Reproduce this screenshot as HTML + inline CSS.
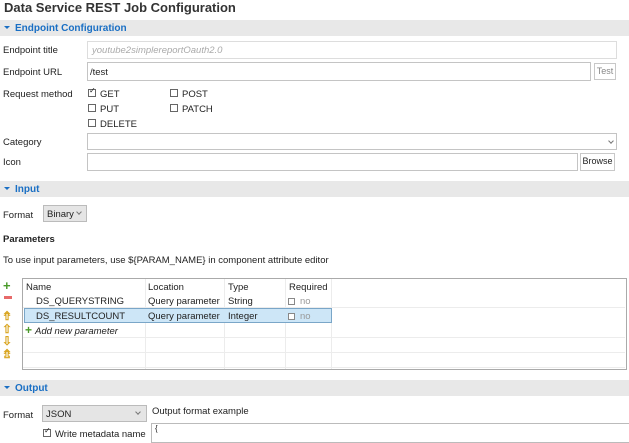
<!DOCTYPE html>
<html><head><meta charset="utf-8"><style>
*{margin:0;padding:0;box-sizing:border-box}
body{width:629px;height:439px;overflow:hidden;background:#fff;font-family:"Liberation Sans",sans-serif;font-size:9.5px;color:#222;position:relative}
.a{position:absolute;white-space:nowrap}
.hdr{position:absolute;left:0;width:629px;height:16px;background:#e8e8e8;color:#1a6fc4;font-weight:bold;font-size:10px;line-height:17px;padding-left:4px}
.hdr:before{content:"";display:inline-block;border-left:3px solid transparent;border-right:3px solid transparent;border-top:3px solid #1a6fc4;margin-right:5px;vertical-align:2px}
.box{position:absolute;border:1px solid #c4c4c4;background:#fff}
.btn{position:absolute;border:1px solid #c8c8c8;background:#fff;text-align:center;line-height:15px;font-size:9px}
.cb{position:absolute;width:8px;height:8px;border:1px solid #666;background:#fff}
.chev{position:absolute;width:4px;height:4px;border-right:1px solid #777;border-bottom:1px solid #777;transform:rotate(45deg)}
.vl{position:absolute;top:279px;width:1px;height:90px;background:#ececec}
.hl{position:absolute;left:23px;width:602px;height:1px;background:#ececec}
.ar{position:absolute;left:2px;color:#d9a520;font-size:12px;font-weight:bold}
</style></head><body>
<div class="a" style="left:4px;top:0px;font-size:13px;font-weight:bold;color:#333">Data Service REST Job Configuration</div>
<div class="hdr" style="top:20px">Endpoint Configuration</div>

<div class="a" style="left:3px;top:45px">Endpoint title</div>
<div class="box" style="left:87px;top:41px;width:530px;height:18px;border-color:#ddd"></div>
<div class="a" style="left:92px;top:45px;color:#aaa;font-style:italic">youtube2simplereportOauth2.0</div>

<div class="a" style="left:3px;top:67px">Endpoint URL</div>
<div class="box" style="left:87px;top:62px;width:504px;height:19px"></div>
<div class="a" style="left:90px;top:67px">/test</div>
<div class="btn" style="left:594px;top:63px;width:22px;height:17px;color:#888">Test</div>

<div class="a" style="left:3px;top:89px">Request method</div>
<div class="cb" style="left:88px;top:89px"></div><div class="a" style="left:89px;top:86px;font-size:8px">✓</div>
<div class="a" style="left:100px;top:89px">GET</div>
<div class="cb" style="left:170px;top:89px"></div><div class="a" style="left:182px;top:89px">POST</div>
<div class="cb" style="left:88px;top:104px"></div><div class="a" style="left:100px;top:104px">PUT</div>
<div class="cb" style="left:170px;top:104px"></div><div class="a" style="left:182px;top:104px">PATCH</div>
<div class="cb" style="left:88px;top:119px"></div><div class="a" style="left:100px;top:119px">DELETE</div>

<div class="a" style="left:3px;top:137px">Category</div>
<div class="box" style="left:87px;top:133px;width:530px;height:17px"></div>
<div class="chev" style="left:609px;top:139px"></div>

<div class="a" style="left:3px;top:157px">Icon</div>
<div class="box" style="left:87px;top:153px;width:491px;height:18px"></div>
<div class="btn" style="left:580px;top:153px;width:35px;height:18px;color:#222">Browse</div>

<div class="hdr" style="top:181px">Input</div>
<div class="a" style="left:3px;top:210px">Format</div>
<div class="box" style="left:43px;top:205px;width:44px;height:17px;background:#e5e5e5;border-color:#bbb"></div>
<div class="a" style="left:47px;top:209px">Binary</div>
<div class="chev" style="left:77px;top:210px"></div>

<div class="a" style="left:3px;top:234px;font-weight:bold">Parameters</div>
<div class="a" style="left:3px;top:255px">To use input parameters, use ${PARAM_NAME} in component attribute editor</div>

<div class="box" style="left:22px;top:278px;width:605px;height:92px;border-color:#aaa"></div>
<div class="vl" style="left:145px"></div><div class="vl" style="left:224px"></div><div class="vl" style="left:285px"></div><div class="vl" style="left:331px"></div>
<div class="hl" style="top:307px"></div><div class="hl" style="top:337px"></div><div class="hl" style="top:352px"></div><div class="hl" style="top:367px"></div>
<div class="a" style="left:24px;top:308px;width:308px;height:15px;background:#cde6f7;border:1px solid #7aa6c8"></div>
<div class="a" style="left:26px;top:282px">Name</div><div class="a" style="left:148px;top:282px">Location</div><div class="a" style="left:228px;top:282px">Type</div><div class="a" style="left:289px;top:282px">Required</div>
<div class="a" style="left:36px;top:296px">DS_QUERYSTRING</div><div class="a" style="left:148px;top:296px">Query parameter</div><div class="a" style="left:228px;top:296px">String</div>
<div class="cb" style="left:288px;top:298px;width:7px;height:7px;border-color:#888"></div><div class="a" style="left:300px;top:296px;color:#999">no</div>
<div class="a" style="left:36px;top:311px">DS_RESULTCOUNT</div><div class="a" style="left:148px;top:311px">Query parameter</div><div class="a" style="left:228px;top:311px">Integer</div>
<div class="cb" style="left:288px;top:313px;width:7px;height:7px;border-color:#888"></div><div class="a" style="left:300px;top:311px;color:#999">no</div>
<div class="a" style="left:25px;top:323px;color:#4a9a2a;font-weight:bold;font-size:12px">+</div>
<div class="a" style="left:35px;top:326px;font-style:italic">Add new parameter</div>

<div class="a" style="left:3px;top:278px;color:#4a9a2a;font-weight:bold;font-size:13px">+</div>
<div class="a" style="left:4px;top:296px;width:8px;height:3px;background:#e76a6a"></div>
<div class="ar" style="top:309px">⇮</div>
<div class="ar" style="top:322px">⇧</div>
<div class="ar" style="top:334px">⇩</div>
<div class="ar" style="top:347px">⇯</div>

<div class="hdr" style="top:380px">Output</div>
<div class="a" style="left:3px;top:410px">Format</div>
<div class="box" style="left:42px;top:405px;width:105px;height:17px;background:#e5e5e5;border-color:#bbb"></div>
<div class="a" style="left:46px;top:409px">JSON</div>
<div class="chev" style="left:136px;top:410px"></div>
<div class="a" style="left:152px;top:406px">Output format example</div>
<div class="box" style="left:151px;top:423px;width:480px;height:20px;border-color:#bbb"></div>
<div class="a" style="left:155px;top:424px;font-size:8px">{</div>
<div class="cb" style="left:43px;top:429px"></div><div class="a" style="left:44px;top:426px;font-size:8px">✓</div>
<div class="a" style="left:55px;top:429px">Write metadata name</div>
</body></html>
